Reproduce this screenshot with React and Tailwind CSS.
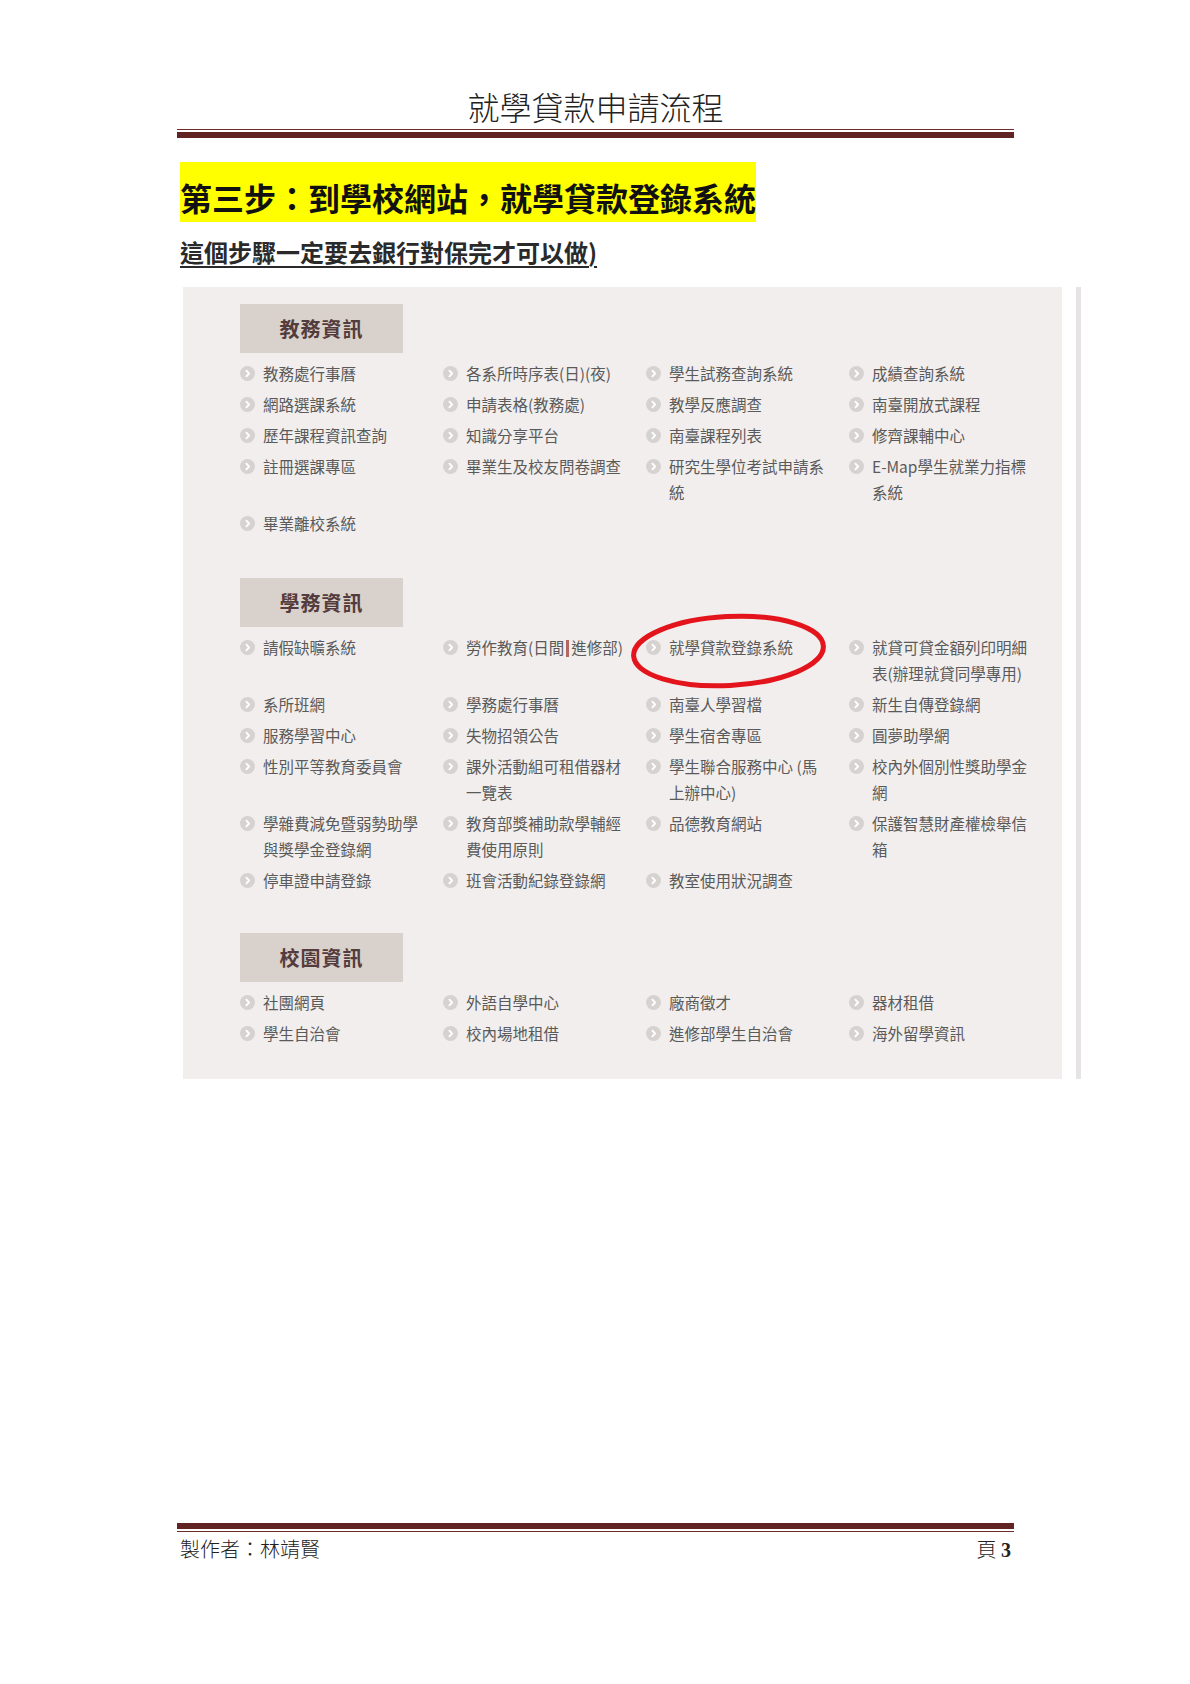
import React from "react";

const CJK = "font-['Noto_Sans_CJK_TC','Noto_Sans_CJK_SC',sans-serif]";

const Bullet = () => (
  <svg width="15" height="15" viewBox="0 0 15 15" className="shrink-0 mt-[5.5px]">
    <circle cx="7.5" cy="7.5" r="7.5" fill="#d5d2d0" />
    <path d="M6.4 4.7 L9.1 7.5 L6.4 10.3" fill="none" stroke="#ffffff" strokeWidth="1.9" strokeLinecap="round" strokeLinejoin="round" />
  </svg>
);

const Item = ({ lines, circle }) => (
  <div className="relative flex gap-[8px]">
    <Bullet />
    <div className="whitespace-nowrap text-[15.5px] leading-[26px] text-[#5a5a5a]">
      {lines.map((l, i) => (
        <div key={i}>{l}</div>
      ))}
    </div>
    {circle && (
      <svg
        className="absolute left-[-16px] top-[-21px] pointer-events-none"
        width="197"
        height="76"
        viewBox="0 0 197 76"
      >
        <ellipse
          cx="98.5"
          cy="38"
          rx="95"
          ry="34.5"
          fill="none"
          stroke="#e3141b"
          strokeWidth="5"
          transform="rotate(-3 98.5 38)"
        />
      </svg>
    )}
  </div>
);

const Section = ({ title, items, className = "" }) => (
  <div className={className}>
    <div className="w-[163px] h-[49px] bg-[#d8d1cc] flex items-center justify-center">
      <span className="text-[20px] font-bold tracking-[1px] text-[#553c3c]">{title}</span>
    </div>
    <div className="mt-[7px] grid grid-cols-[repeat(4,203px)] gap-y-[5px]">
      {items.map((it, i) =>
        it ? <Item key={i} lines={it.l} circle={it.c} /> : <div key={i} />
      )}
    </div>
  </div>
);

const L = (...l) => ({ l });

const sec1 = [
  L("教務處行事曆"), L("各系所時序表(日)(夜)"), L("學生試務查詢系統"), L("成績查詢系統"),
  L("網路選課系統"), L("申請表格(教務處)"), L("教學反應調查"), L("南臺開放式課程"),
  L("歷年課程資訊查詢"), L("知識分享平台"), L("南臺課程列表"), L("修齊課輔中心"),
  L("註冊選課專區"), L("畢業生及校友問卷調查"), L("研究生學位考試申請系", "統"), L("E-Map學生就業力指標", "系統"),
  L("畢業離校系統"),
];

const labor = (
  <span>
    勞作教育(日間<span className="inline-block w-[3px] h-[17px] bg-[#b2675f] align-[-3px] mx-[2px]" />進修部)
  </span>
);

const sec2 = [
  L("請假缺曠系統"), { l: [labor] }, { l: ["就學貸款登錄系統"], c: true }, L("就貸可貸金額列印明細", "表(辦理就貸同學專用)"),
  L("系所班網"), L("學務處行事曆"), L("南臺人學習檔"), L("新生自傳登錄網"),
  L("服務學習中心"), L("失物招領公告"), L("學生宿舍專區"), L("圓夢助學網"),
  L("性別平等教育委員會"), L("課外活動組可租借器材", "一覽表"), L("學生聯合服務中心 (馬", "上辦中心)"), L("校內外個別性獎助學金", "網"),
  L("學雜費減免暨弱勢助學", "與獎學金登錄網"), L("教育部獎補助款學輔經", "費使用原則"), L("品德教育網站"), L("保護智慧財產權檢舉信", "箱"),
  L("停車證申請登錄"), L("班會活動紀錄登錄網"), L("教室使用狀況調查"),
];

const sec3 = [
  L("社團網頁"), L("外語自學中心"), L("廠商徵才"), L("器材租借"),
  L("學生自治會"), L("校內場地租借"), L("進修部學生自治會"), L("海外留學資訊"),
];

export default function App() {
  return (
    <div className={`w-[1190px] h-[1684px] bg-white relative ${CJK}`}>
      <div className="pl-[177px] w-[1014px]">
        {/* header */}
        <div className="pt-[86px] h-[126px] text-center text-[32px] leading-[40px] text-[#222] font-light">
          就學貸款申請流程
        </div>
        <div className="mt-[3px] h-[1px] bg-[#6b2d2b]" />
        <div className="mt-[2px] h-[5.5px] bg-[#622423]" />

        {/* highlighted heading */}
        <div className="mt-[24.5px] pl-[3px]">
          <div className="inline-block bg-[#ffff00] h-[60px] pt-[10px] text-[32px] leading-[50px] font-bold text-[#111]">
            第三步：到學校網站，就學貸款登錄系統
          </div>
        </div>
        <div className="mt-[15px] pl-[3px] h-[30px] text-[24px] leading-[30px] font-bold text-[#2a2a2a] underline underline-offset-[4px] decoration-[1.5px]">
          這個步驟一定要去銀行對保完才可以做)
        </div>
      </div>

      {/* screenshot panel */}
      <div className="mt-[20px] flex">
        <div className="ml-[183px] w-[879px] bg-[#f1eeed] pt-[17px] pb-[33px] pl-[57px]">
          <Section title="教務資訊" items={sec1} />
          <Section title="學務資訊" items={sec2} className="mt-[42px]" />
          <Section title="校園資訊" items={sec3} className="mt-[40px]" />
        </div>
        <div className="ml-[14px] w-[5px] bg-[#e6e4e4]" />
      </div>

      {/* footer */}
      <div className="absolute left-[177px] top-[1523px] w-[837px]">
        <div className="h-[6px] bg-[#622423]" />
        <div className="mt-[1.5px] h-[1px] bg-[#6b2d2b]" />
        <div className="mt-[4px] flex justify-between pl-[3px] pr-[3px] text-[20px] leading-[26px] text-[#222] font-light">
          <span>製作者：林靖賢</span>
          <span>
            頁 <span className="font-bold font-['Liberation_Serif',serif]">3</span>
          </span>
        </div>
      </div>
    </div>
  );
}
